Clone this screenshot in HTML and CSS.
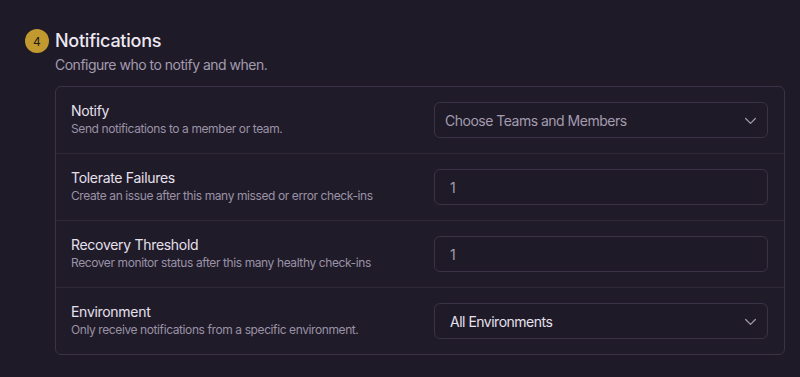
FILE: index.html
```html
<!DOCTYPE html>
<html lang="en">
<head>
    <meta charset="UTF-8">
    <meta name="viewport" content="width=device-width, initial-scale=1.0">
    <title>Notifications</title>
    <link rel="stylesheet" href="styles.css">
</head>
<body>
    <div class="step">
        <div class="step-header">
            <span class="step-number">4</span>
            <h2>Notifications</h2>
        </div>
        <div class="step-body">
            <p class="step-desc">Configure who to notify and when.</p>

            <div class="panel">
                <div class="field">
                    <div class="field-label">
                        <div class="label">Notify</div>
                        <div class="help">Send notifications to a member or team.</div>
                    </div>
                    <div class="control select">
                        <span class="placeholder">Choose Teams and Members</span>
                        <svg class="chevron" width="13" height="13" viewBox="0 0 16 16"><path d="M2 5.5 8 11.5l6-6" fill="none" stroke="currentColor" stroke-width="1.5" stroke-linecap="round" stroke-linejoin="round"/></svg>
                    </div>
                </div>
                <div class="field">
                    <div class="field-label">
                        <div class="label">Tolerate Failures</div>
                        <div class="help">Create an issue after this many missed or error check-ins</div>
                    </div>
                    <div class="control input">
                        <span class="placeholder">1</span>
                    </div>
                </div>
                <div class="field">
                    <div class="field-label">
                        <div class="label">Recovery Threshold</div>
                        <div class="help">Recover monitor status after this many healthy check-ins</div>
                    </div>
                    <div class="control input">
                        <span class="placeholder">1</span>
                    </div>
                </div>
                <div class="field">
                    <div class="field-label">
                        <div class="label">Environment</div>
                        <div class="help">Only receive notifications from a specific environment.</div>
                    </div>
                    <div class="control select">
                        <span class="value">All Environments</span>
                        <svg class="chevron" width="13" height="13" viewBox="0 0 16 16"><path d="M2 5.5 8 11.5l6-6" fill="none" stroke="currentColor" stroke-width="1.5" stroke-linecap="round" stroke-linejoin="round"/></svg>
                    </div>
                </div>
            </div>
        </div>
    </div>
</body>
</html>
```

FILE: styles.css
```css
body {
    margin: 0;
    background-color: #1f1a27;
    font-family: Inter, "Noto Sans", sans-serif;
    color: #e6e0ee;
}
.step {
    padding: 29px 15px 0 25px;
}
.step-header {
    display: flex;
    align-items: center;
    gap: 6px;
}
.step-number {
    width: 24px;
    height: 24px;
    border-radius: 50%;
    background-color: #c2992f;
    color: #1f1a14;
    font-size: 12px;
    display: flex;
    align-items: center;
    justify-content: center;
}
h2 {
    margin: 0;
    font-size: 18px;
    font-weight: 500;
    line-height: 24px;
    letter-spacing: -0.25px;
    color: #ece7f2;
}
.step-body {
    padding-left: 30px;
}
.step-desc {
    margin: 2px 0 11px;
    font-size: 14px;
    line-height: 20px;
    letter-spacing: -0.5px;
    color: #a39bb0;
}
.panel {
    border: 1px solid #3a3347;
    border-radius: 6px;
    background-color: #201b29;
}
.field {
    display: flex;
    align-items: center;
    gap: 16px;
    padding: 15px 16px 15px 15px;
    border-top: 1px solid #2e2839;
}
.field:first-child {
    border-top: none;
}
.field-label {
    flex: 1;
}
.label {
    font-size: 14px;
    line-height: 16px;
    letter-spacing: -0.3px;
    color: #e6e0ee;
}
.help {
    margin-top: 2px;
    font-size: 12px;
    line-height: 16px;
    letter-spacing: -0.4px;
    color: #9a92a6;
}
.control {
    width: 334px;
    height: 36px;
    box-sizing: border-box;
    border: 1px solid #3a3347;
    border-radius: 6px;
    background-color: #1f1a27;
    display: flex;
    align-items: center;
    justify-content: space-between;
    font-size: 14px;
    letter-spacing: -0.5px;
}
.select {
    padding: 0 10px 0 10px;
}
.input {
    padding: 0 15px;
}
.placeholder {
    color: #a39bb0;
}
.value {
    color: #e6e0ee;
    padding-left: 5px;
}
.chevron {
    color: #a39bb0;
}
```
